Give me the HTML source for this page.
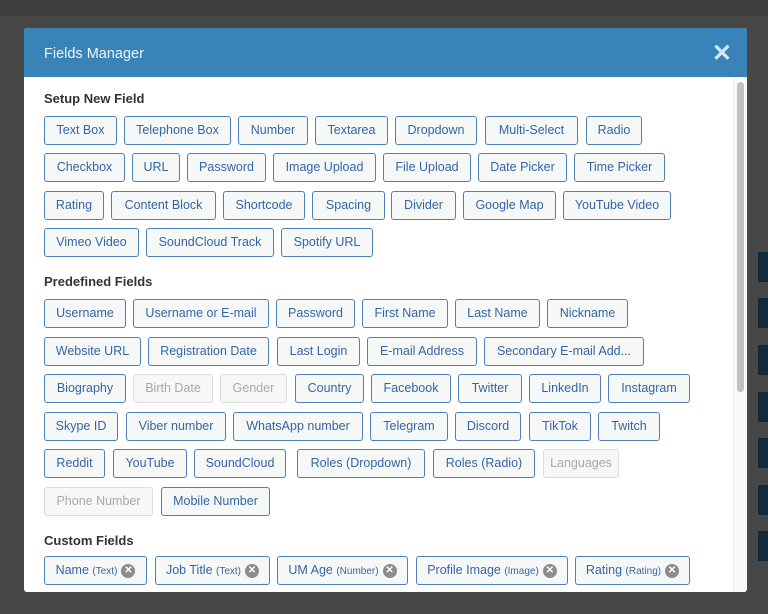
<!DOCTYPE html>
<html><head><meta charset="utf-8"><style>
*{box-sizing:border-box;margin:0;padding:0}
body{width:768px;height:614px;background:#474747;position:relative;overflow:hidden;font-family:"Liberation Sans",sans-serif}
.topband{position:absolute;left:0;top:0;width:768px;height:16px;background:#3d3d3d}
.rb{position:absolute;left:758px;width:10px;height:30px;background:#14293a}
.modal{position:absolute;left:24px;top:28px;width:723px;height:564px;background:#fff;border-radius:3px;overflow:hidden}
.hd{position:absolute;left:0;top:0;width:723px;height:49px;background:#3883b8;color:#eef4fa;font-size:14.5px;line-height:52px;padding-left:20px}
.x{position:absolute;right:15px;top:15px;color:#d8e6f1;font-size:24px;font-weight:bold;line-height:22px}
.sb{position:absolute;left:709px;top:49px;width:14px;height:515px;background:#fafafa;border-left:1px solid #eee}
.th{position:absolute;left:713px;top:54px;width:7px;height:310px;background:#c1c1c1;border-radius:4px}
h3{position:absolute;left:20px;font-size:13px;font-weight:bold;color:#333}
.b{position:absolute;height:29px;border:1px solid #4e80b9;border-radius:3px;background:#f6f7f7;color:#3466a6;font-size:12.5px;line-height:27px;text-align:center;white-space:nowrap}
.d{border-color:#dcdcdc;color:#a7aaad;background:#f6f7f7}
.b small{font-size:10px}
.c{display:inline-block;width:14px;height:14px;border-radius:50%;background:#8c8c8c;color:#fff;font-size:10px;line-height:14px;vertical-align:middle;margin-left:4px;font-weight:bold}
</style></head><body>
<div class="topband"></div>
<div class="rb" style="top:252px"></div><div class="rb" style="top:298px"></div><div class="rb" style="top:345px"></div><div class="rb" style="top:392px"></div><div class="rb" style="top:438px"></div><div class="rb" style="top:485px"></div><div class="rb" style="top:531px"></div>
<div class="modal">
<div class="hd">Fields Manager<span class="x">✕</span></div>
<div class="sb"></div><div class="th"></div>
<h3 style="top:63px">Setup New Field</h3>
<div class="b" style="top:88px;left:20px;width:73px">Text Box</div>
<div class="b" style="top:88px;left:100px;width:107px">Telephone Box</div>
<div class="b" style="top:88px;left:214px;width:70px">Number</div>
<div class="b" style="top:88px;left:291px;width:73px">Textarea</div>
<div class="b" style="top:88px;left:371px;width:82px">Dropdown</div>
<div class="b" style="top:88px;left:461px;width:93px">Multi-Select</div>
<div class="b" style="top:88px;left:562px;width:56px">Radio</div>

<div class="b" style="top:125px;left:20px;width:81px">Checkbox</div>
<div class="b" style="top:125px;left:108px;width:48px">URL</div>
<div class="b" style="top:125px;left:163px;width:79px">Password</div>
<div class="b" style="top:125px;left:249px;width:103px">Image Upload</div>
<div class="b" style="top:125px;left:359px;width:88px">File Upload</div>
<div class="b" style="top:125px;left:454px;width:89px">Date Picker</div>
<div class="b" style="top:125px;left:550px;width:91px">Time Picker</div>

<div class="b" style="top:163px;left:20px;width:60px">Rating</div>
<div class="b" style="top:163px;left:87px;width:105px">Content Block</div>
<div class="b" style="top:163px;left:199px;width:82px">Shortcode</div>
<div class="b" style="top:163px;left:288px;width:73px">Spacing</div>
<div class="b" style="top:163px;left:367px;width:65px">Divider</div>
<div class="b" style="top:163px;left:439px;width:93px">Google Map</div>
<div class="b" style="top:163px;left:539px;width:108px">YouTube Video</div>

<div class="b" style="top:200px;left:20px;width:95px">Vimeo Video</div>
<div class="b" style="top:200px;left:122px;width:128px">SoundCloud Track</div>
<div class="b" style="top:200px;left:257px;width:92px">Spotify URL</div>

<h3 style="top:246px">Predefined Fields</h3>
<div class="b" style="top:271px;left:20px;width:82px">Username</div>
<div class="b" style="top:271px;left:109px;width:136px">Username or E-mail</div>
<div class="b" style="top:271px;left:252px;width:79px">Password</div>
<div class="b" style="top:271px;left:338px;width:86px">First Name</div>
<div class="b" style="top:271px;left:431px;width:85px">Last Name</div>
<div class="b" style="top:271px;left:523px;width:81px">Nickname</div>

<div class="b" style="top:309px;left:20px;width:97px">Website URL</div>
<div class="b" style="top:309px;left:124px;width:121px">Registration Date</div>
<div class="b" style="top:309px;left:253px;width:83px">Last Login</div>
<div class="b" style="top:309px;left:343px;width:110px">E-mail Address</div>
<div class="b" style="top:309px;left:460px;width:160px">Secondary E-mail Add...</div>

<div class="b" style="top:346px;left:20px;width:82px">Biography</div>
<div class="b d" style="top:346px;left:109px;width:80px">Birth Date</div>
<div class="b d" style="top:346px;left:196px;width:67px">Gender</div>
<div class="b" style="top:346px;left:271px;width:69px">Country</div>
<div class="b" style="top:346px;left:347px;width:80px">Facebook</div>
<div class="b" style="top:346px;left:434px;width:64px">Twitter</div>
<div class="b" style="top:346px;left:505px;width:72px">LinkedIn</div>
<div class="b" style="top:346px;left:584px;width:82px">Instagram</div>

<div class="b" style="top:384px;left:20px;width:74px">Skype ID</div>
<div class="b" style="top:384px;left:102px;width:100px">Viber number</div>
<div class="b" style="top:384px;left:209px;width:130px">WhatsApp number</div>
<div class="b" style="top:384px;left:346px;width:78px">Telegram</div>
<div class="b" style="top:384px;left:431px;width:66px">Discord</div>
<div class="b" style="top:384px;left:505px;width:62px">TikTok</div>
<div class="b" style="top:384px;left:574px;width:62px">Twitch</div>

<div class="b" style="top:421px;left:20px;width:61px">Reddit</div>
<div class="b" style="top:421px;left:89px;width:74px">YouTube</div>
<div class="b" style="top:421px;left:170px;width:92px">SoundCloud</div>
<div class="b" style="top:421px;left:273px;width:128px">Roles (Dropdown)</div>
<div class="b" style="top:421px;left:409px;width:102px">Roles (Radio)</div>
<div class="b d" style="top:421px;left:519px;width:76px">Languages</div>

<div class="b d" style="top:459px;left:20px;width:109px">Phone Number</div>
<div class="b" style="top:459px;left:137px;width:109px">Mobile Number</div>

<h3 style="top:505px">Custom Fields</h3>
<div class="b" style="top:528px;left:20px;width:103px">Name <small>(Text)</small><span class="c">✕</span></div>
<div class="b" style="top:528px;left:131px;width:115px">Job Title <small>(Text)</small><span class="c">✕</span></div>
<div class="b" style="top:528px;left:253px;width:131px">UM Age <small>(Number)</small><span class="c">✕</span></div>
<div class="b" style="top:528px;left:392px;width:152px">Profile Image <small>(Image)</small><span class="c">✕</span></div>
<div class="b" style="top:528px;left:551px;width:115px">Rating <small>(Rating)</small><span class="c">✕</span></div>
</div>
</body></html>
